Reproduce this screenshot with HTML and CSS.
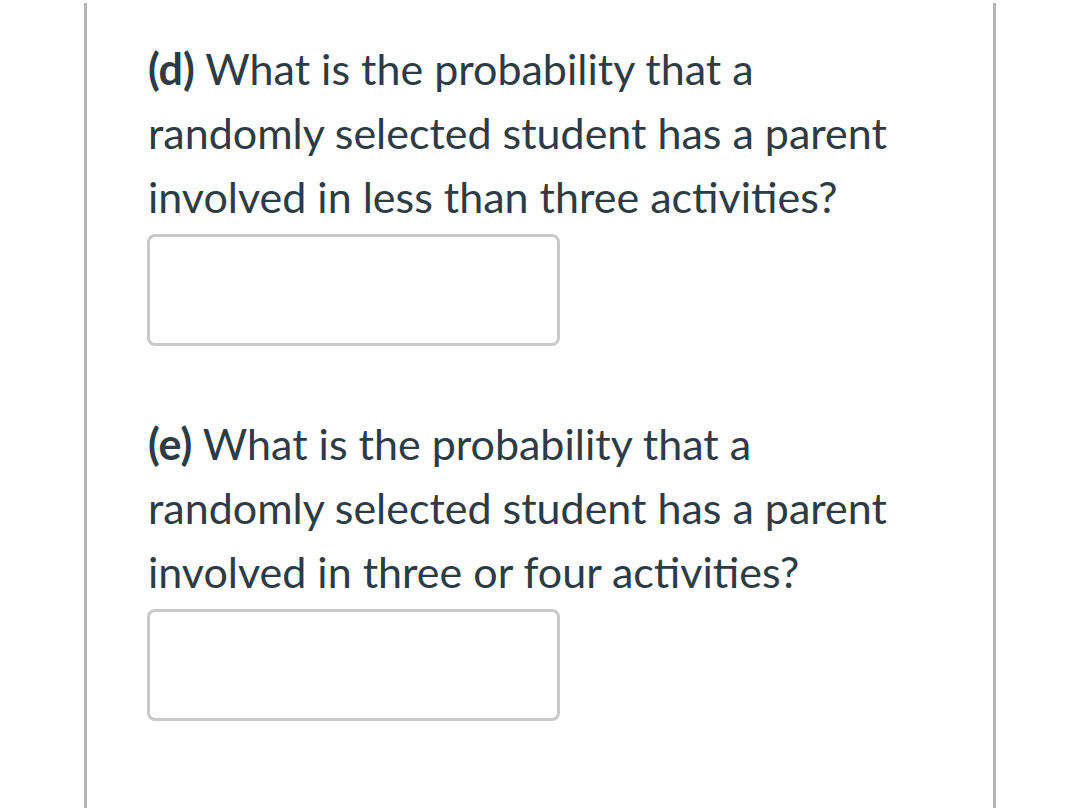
FILE: index.html
```html
<!DOCTYPE html>
<html>
<head>
<meta charset="utf-8">
<link rel="stylesheet" href="styles.css">
</head>
<body>
<div class="page">
  <div class="panel">
    <div class="question">
      <p class="prompt"><strong>(d)</strong> What is the probability that a randomly selected student has a parent involved in less than three activities?</p>
      <input class="answer" type="text">
    </div>
    <div class="question">
      <p class="prompt"><strong>(e)</strong> What is the probability that a randomly selected student has a parent involved in three or four activities?</p>
      <input class="answer" type="text">
    </div>
  </div>
</div>
</body>
</html>
```
FILE: styles.css
```css
html, body {
  margin: 0;
  padding: 0;
  background: #ffffff;
}
.page {
  width: 1080px;
  height: 808px;
  overflow: hidden;
  padding-top: 3px;
  box-sizing: border-box;
}
.panel {
  margin-left: 84px;
  width: 846px;
  height: 805px;
  border-left: 3px solid #b3b3b3;
  border-right: 3px solid #b3b3b3;
  padding: 34px 0 0 60px;
  box-sizing: content-box;
  font-family: Lato, "Open Sans", sans-serif;
  color: #2d3b45;
}
.question {
  margin-bottom: 66px;
}
.prompt {
  margin: 0;
  padding-left: 1px;
  width: 760px;
  font-size: 43px;
  line-height: 64px;
  font-weight: 400;
}
.prompt strong {
  font-weight: 700;
}
.answer {
  display: block;
  margin-top: 5px;
  width: 413px;
  height: 112px;
  box-sizing: border-box;
  border: 3px solid #c9c9c9;
  border-radius: 8px;
  background: #ffffff;
  outline: none;
}
```
